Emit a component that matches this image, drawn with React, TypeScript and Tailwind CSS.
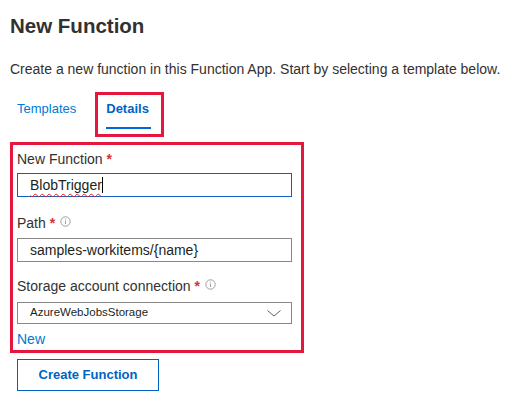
import React from "react";

function InfoIcon() {
  return (
    <svg width="11" height="11" viewBox="0 0 11 11" className="inline-block">
      <circle cx="5.5" cy="5.5" r="4.7" fill="none" stroke="#a19f9d" strokeWidth="1" />
      <line x1="5.5" y1="4.6" x2="5.5" y2="8" stroke="#a19f9d" strokeWidth="1" />
      <circle cx="5.5" cy="3.1" r="0.6" fill="#a19f9d" />
    </svg>
  );
}

function Label({ text, info }: { text: string; info?: boolean }) {
  return (
    <div className="flex items-center h-[20px] leading-[20px] text-[14px] text-[#323130]">
      <span>{text}</span>
      <span className="ml-[4px] text-[#d13438] font-bold">*</span>
      {info && (
        <span className="ml-[5px] flex items-center mt-[-4px]">
          <InfoIcon />
        </span>
      )}
    </div>
  );
}

export default function App() {
  return (
    <div className="w-[508px] h-[413px] bg-white font-['Liberation_Sans',Arial,sans-serif] pl-[10px] pt-[12px] box-border overflow-hidden">
      <h1 className="text-[20.5px] leading-[28px] font-bold text-[#323130]">New Function</h1>
      <p className="mt-[19px] text-[14px] leading-[20px] text-[#323130] whitespace-nowrap">
        Create a new function in this Function App. Start by selecting a template below.
      </p>

      <div className="mt-[13px] flex items-start">
        <div className="pl-[7px] pt-[7px] text-[13px] leading-[20px] text-[#0078d4]">Templates</div>
        <div className="ml-[19px] w-[69px] h-[45px] border-[3px] border-[#e5173f] box-border pl-[8px] pt-[4px]">
          <div className="text-[13px] leading-[20px] font-bold text-[#0064c8]">Details</div>
          <div className="mt-[8px] w-[45px] h-[2px] bg-[#0067d6]" />
        </div>
      </div>

      <div className="mt-[5px] w-[294px] h-[211px] border-[3px] border-[#e5173f] box-border pl-[4px] pt-[4px]">
        <Label text="New Function" />
        <div className="mt-[4px] w-[275px] h-[24px] border border-[#1060c0] box-border flex items-center pl-[12px] text-[14px] text-[#201f1e]">
          <span className="underline decoration-wavy decoration-[#e02020] decoration-1 underline-offset-[3px]">BlobTrigger</span>
          <span className="inline-block w-[1px] h-[16px] bg-black" />
        </div>

        <div className="mt-[16px]">
          <Label text="Path" info />
        </div>
        <div className="mt-[5px] w-[275px] h-[24px] border border-[#8a8886] box-border flex items-center pl-[12px] text-[14px] text-[#201f1e]">
          samples-workitems/{"{name}"}
        </div>

        <div className="mt-[14px]">
          <Label text="Storage account connection" info />
        </div>
        <div className="mt-[6px] w-[275px] h-[22px] border border-[#8a8886] box-border flex items-center justify-between pl-[12px] pr-[10px] text-[11.5px] text-[#201f1e]">
          <span>AzureWebJobsStorage</span>
          <svg width="14" height="7" viewBox="0 0 14 7">
            <polyline points="0.5,0.5 7,6 13.5,0.5" fill="none" stroke="#605e5c" strokeWidth="1" />
          </svg>
        </div>

        <div className="mt-[5px] text-[14px] leading-[20px] text-[#0078d4]">New</div>
      </div>

      <div className="mt-[6px] ml-[7px] w-[142px] h-[32px] border border-[#0062c3] box-border flex items-center justify-center text-[13px] font-bold text-[#0062c3]">
        Create Function
      </div>
    </div>
  );
}
